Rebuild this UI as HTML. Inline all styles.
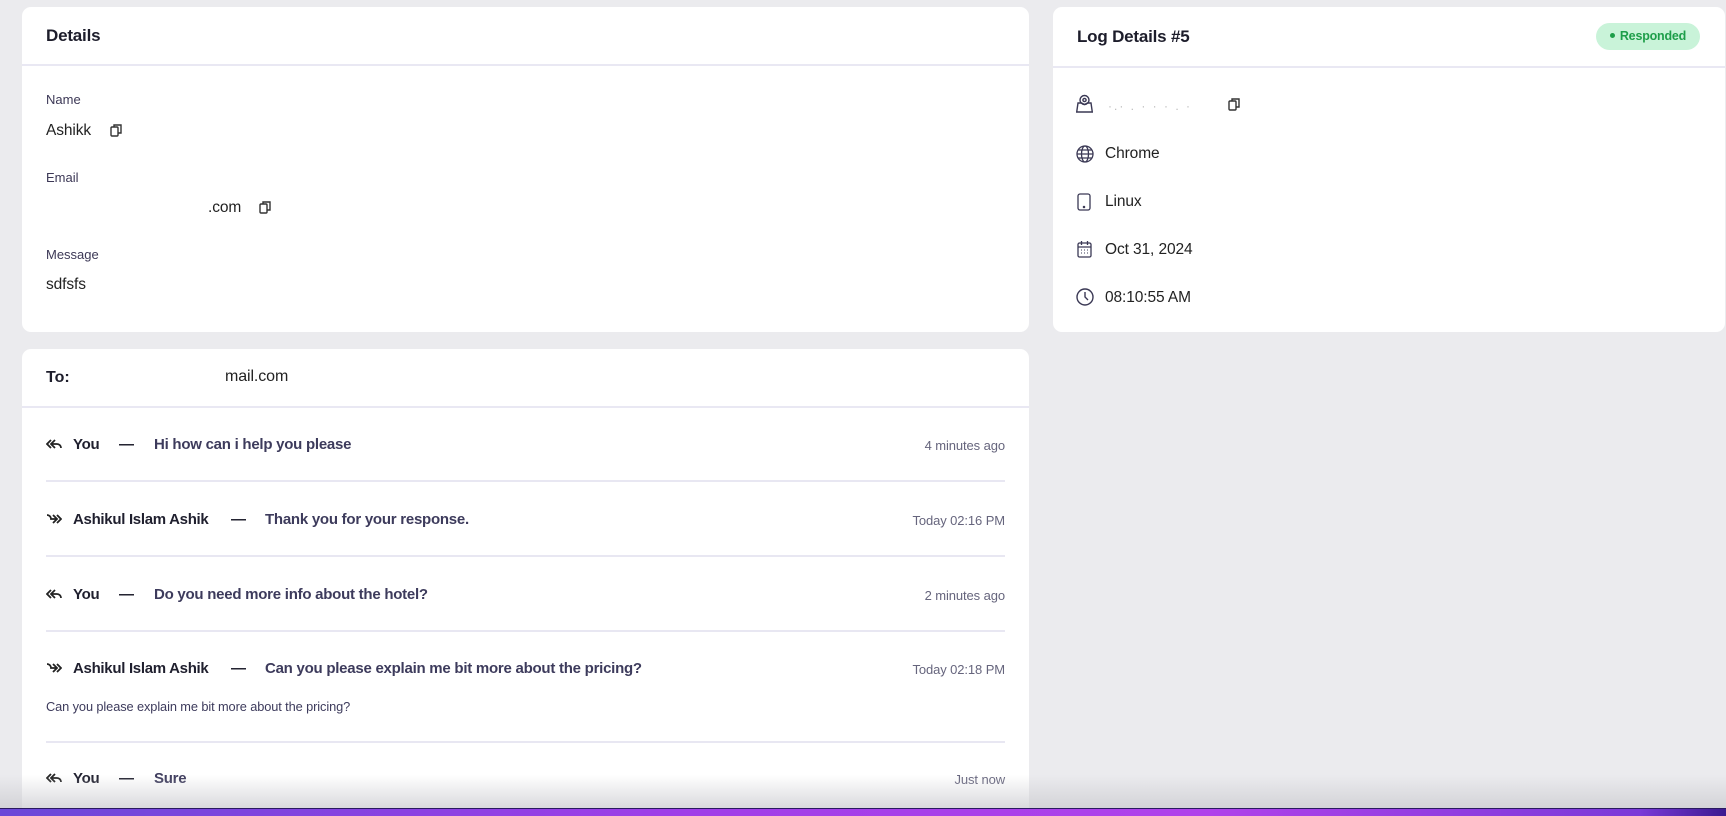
<!DOCTYPE html>
<html><head><style>
*{box-sizing:border-box;margin:0;padding:0}
html,body{width:1726px;height:816px;overflow:hidden}
body{background:#ebebee;font-family:"Liberation Sans",sans-serif;position:relative;color:#1d1d2b}
.card{position:absolute;background:#fff;border-radius:9px;overflow:hidden}
.hd{position:absolute;left:0;right:0;border-bottom:2px solid #e9e8f3}
.t{position:absolute;white-space:nowrap}
.lbl{font-size:13px;color:#3c3856}
.val{font-size:15.5px;color:#222;letter-spacing:-0.1px}
.row{position:absolute;left:24px;right:24px;height:30px}
.sep{position:absolute;left:24px;right:24px;height:2px;background:#e8e7f2}
.ic{position:absolute;left:0;top:8px}
.nm{position:absolute;left:27px;top:6px;font-size:15px;font-weight:bold;color:#1f1f2e;letter-spacing:-0.3px}
.dash{position:absolute;top:6px;font-size:15px;font-weight:bold}
.msg{position:absolute;top:6px;font-size:15px;font-weight:bold;color:#3d3b5c;letter-spacing:-0.25px}
.tm{position:absolute;right:0;top:8px;font-size:13px;color:#66657d;letter-spacing:-0.1px}
</style></head><body>

<div class="card" style="left:22px;top:7px;width:1007px;height:325px">
  <div class="hd" style="top:0;height:59px"></div>
  <div class="t" style="left:24px;top:19px;font-size:17px;font-weight:bold;letter-spacing:-0.2px">Details</div>
  <div class="t lbl" style="left:24px;top:85px">Name</div>
  <div class="t val" style="left:24px;top:115px">Ashikk</div>
  <svg class="t" style="left:87px;top:116px" width="14" height="14" viewBox="0 0 14 14" fill="none" stroke="#333" stroke-width="1.4"><rect x="2" y="4" width="7" height="9" rx="1"/><path d="M5 4V2h7v8h-3"/></svg>
  <div class="t lbl" style="left:24px;top:163px">Email</div>
  <div class="t val" style="left:186px;top:192px">.com</div>
  <svg class="t" style="left:236px;top:193px" width="14" height="14" viewBox="0 0 14 14" fill="none" stroke="#333" stroke-width="1.4"><rect x="2" y="4" width="7" height="9" rx="1"/><path d="M5 4V2h7v8h-3"/></svg>
  <div class="t lbl" style="left:24px;top:240px">Message</div>
  <div class="t val" style="left:24px;top:269px">sdfsfs</div>
</div>

<div class="card" style="left:1053px;top:7px;width:672px;height:325px">
  <div class="hd" style="top:0;height:61px"></div>
  <div class="t" style="left:24px;top:20px;font-size:17px;font-weight:bold;letter-spacing:-0.2px">Log Details #5</div>
  <div class="t" style="left:543px;top:16px;width:104px;height:27px;border-radius:14px;background:#c9f3d9;color:#1e9e4a;font-size:12.5px;font-weight:bold;line-height:27px;text-align:center;letter-spacing:-0.2px"><span style="display:inline-block;width:5px;height:5px;border-radius:50%;background:#1e9e4a;vertical-align:middle;margin-right:5px;margin-top:-2px"></span>Responded</div>
  <svg class="t" style="left:23px;top:87px" width="17" height="19" viewBox="0 0 17 19" fill="none" stroke="#3a3854" stroke-width="1.4"><circle cx="8.5" cy="6" r="4.5"/><circle cx="8.5" cy="6" r="1.6"/><path d="M8.5 10.5l-3-1.5H2l-1.3 9h15.6L15 9h-3.5z"/></svg>
  <div class="t" style="left:55px;top:92px;font-size:12px;color:#bbb;letter-spacing:2px">·.· . · · · . ·</div>
  <svg class="t" style="left:174px;top:90px" width="14" height="14" viewBox="0 0 14 14" fill="none" stroke="#333" stroke-width="1.4"><rect x="2" y="4" width="7" height="9" rx="1"/><path d="M5 4V2h7v8h-3"/></svg>
  <svg class="t" style="left:23px;top:138px" width="18" height="18" viewBox="0 0 18 18" fill="none" stroke="#3a3854" stroke-width="1.3"><circle cx="9" cy="9" r="8"/><ellipse cx="9" cy="9" rx="3.5" ry="8"/><path d="M1 9h16M2.5 5h13M2.5 13h13"/></svg>
  <div class="t val" style="left:52px;top:138px">Chrome</div>
  <svg class="t" style="left:24px;top:186px" width="14" height="18" viewBox="0 0 14 18" fill="none" stroke="#3a3854" stroke-width="1.3"><rect x="1" y="1" width="12" height="16" rx="2"/><circle cx="7" cy="14" r=".6" fill="#3a3854"/></svg>
  <div class="t val" style="left:52px;top:186px">Linux</div>
  <svg class="t" style="left:24px;top:233px" width="15" height="18" viewBox="0 0 15 18" fill="none" stroke="#3a3854" stroke-width="1.3"><rect x="1" y="3" width="13" height="14" rx="1.5"/><path d="M1 7h13M4.5 1v4M10.5 1v4"/><path d="M4 10h1M7 10h1M10 10h1M4 13h1M7 13h1M10 13h1" stroke-width="1.1"/></svg>
  <div class="t val" style="left:52px;top:234px">Oct 31, 2024</div>
  <svg class="t" style="left:23px;top:281px" width="18" height="18" viewBox="0 0 18 18" fill="none" stroke="#3a3854" stroke-width="1.4"><circle cx="9" cy="9" r="8"/><path d="M9 4v5l3 3"/></svg>
  <div class="t val" style="left:52px;top:282px">08:10:55 AM</div>
</div>

<div class="card" style="left:22px;top:349px;width:1007px;height:467px;border-radius:9px 9px 0 0">
  <div class="hd" style="top:0;height:59px"></div>
  <div class="t" style="left:24px;top:20px;font-size:16px;font-weight:bold">To:</div>
  <div class="t val" style="left:203px;top:19px;font-size:16px">mail.com</div>

  <div class="row" style="top:81px">
    <svg class="ic" width="16" height="12" viewBox="0 0 16 12" fill="none" stroke="#222" stroke-width="1.8"><path d="M5 2L1 6l4 4M9 2L5 6l4 4M5 6h6a4 4 0 0 1 4 4"/></svg>
    <div class="nm">You</div><div class="dash" style="left:73px">—</div>
    <div class="msg" style="left:108px">Hi how can i help you please</div>
    <div class="tm">4 minutes ago</div>
  </div>
  <div class="sep" style="top:131px"></div>
  <div class="row" style="top:156px">
    <svg class="ic" width="16" height="12" viewBox="0 0 16 12" fill="none" stroke="#222" stroke-width="1.8"><path d="M11 2l4 4-4 4M7 2l4 4-4 4M11 6H5a4 4 0 0 0-4-4"/></svg>
    <div class="nm">Ashikul Islam Ashik</div><div class="dash" style="left:185px">—</div>
    <div class="msg" style="left:219px">Thank you for your response.</div>
    <div class="tm">Today 02:16 PM</div>
  </div>
  <div class="sep" style="top:206px"></div>
  <div class="row" style="top:231px">
    <svg class="ic" width="16" height="12" viewBox="0 0 16 12" fill="none" stroke="#222" stroke-width="1.8"><path d="M5 2L1 6l4 4M9 2L5 6l4 4M5 6h6a4 4 0 0 1 4 4"/></svg>
    <div class="nm">You</div><div class="dash" style="left:73px">—</div>
    <div class="msg" style="left:108px">Do you need more info about the hotel?</div>
    <div class="tm">2 minutes ago</div>
  </div>
  <div class="sep" style="top:281px"></div>
  <div class="row" style="top:305px">
    <svg class="ic" width="16" height="12" viewBox="0 0 16 12" fill="none" stroke="#222" stroke-width="1.8"><path d="M11 2l4 4-4 4M7 2l4 4-4 4M11 6H5a4 4 0 0 0-4-4"/></svg>
    <div class="nm">Ashikul Islam Ashik</div><div class="dash" style="left:185px">—</div>
    <div class="msg" style="left:219px">Can you please explain me bit more about the pricing?</div>
    <div class="tm">Today 02:18 PM</div>
  </div>
  <div class="t" style="left:24px;top:350px;font-size:12.8px;color:#3d3b5c;letter-spacing:-0.1px">Can you please explain me bit more about the pricing?</div>
  <div class="sep" style="top:392px"></div>
  <div class="row" style="top:415px">
    <svg class="ic" width="16" height="12" viewBox="0 0 16 12" fill="none" stroke="#222" stroke-width="1.8"><path d="M5 2L1 6l4 4M9 2L5 6l4 4M5 6h6a4 4 0 0 1 4 4"/></svg>
    <div class="nm">You</div><div class="dash" style="left:73px">—</div>
    <div class="msg" style="left:108px">Sure</div>
    <div class="tm">Just now</div>
  </div>
</div>

<div style="position:absolute;left:0;right:0;top:775px;height:34px;background:linear-gradient(to bottom,rgba(200,200,205,0),rgba(200,200,205,.7))"></div>
<div style="position:absolute;left:0;right:0;top:808px;height:8px;background:linear-gradient(to right,#6a48d8,#a03ee8 40%,#b042ea 70%,#7a3ad8 95%,#3a1a90);border-top:1px solid #2a1a60"></div>
</body></html>
